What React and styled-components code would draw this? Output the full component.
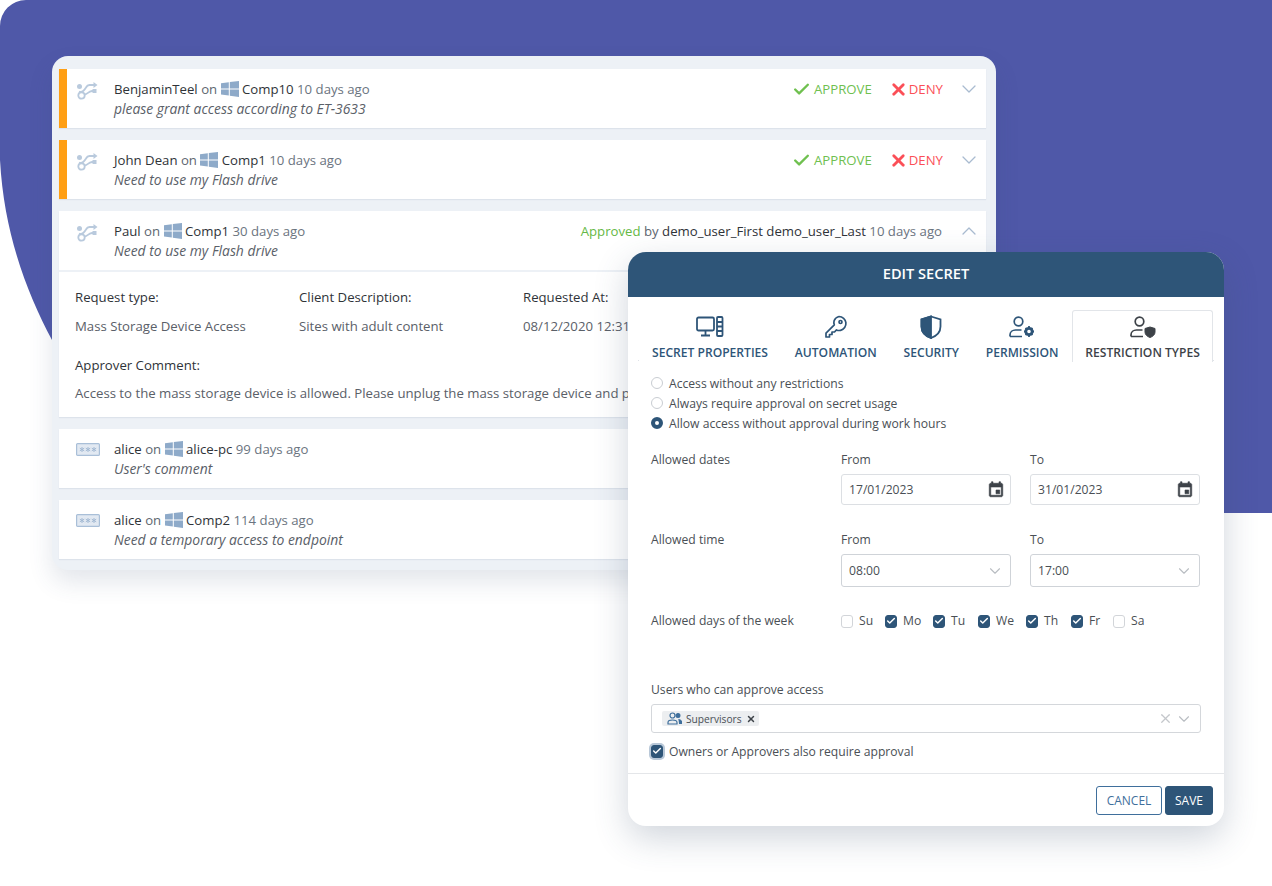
import React from "react";
import styled, { createGlobalStyle } from "styled-components";
import { Check, X, ChevronDown, ChevronUp } from "lucide-react";

const GlobalStyle = createGlobalStyle`
  html, body {
    margin: 0;
    padding: 0;
    background: #ffffff;
    font-family: "Open Sans", "Liberation Sans", sans-serif;
    font-size: 13.2px;
    color: #4a4f55;
  }
`;

const WindowsIcon = () => (
  <WinSvg viewBox="0 0 18 16">
    <path d="M0 2.3 7.8 1.2V7.4H0zM8.8 1 18 0V7.4H8.8zM0 8.4H7.8V14.6L0 13.5zM8.8 8.4H18V16L8.8 14.8z" fill="#8eaac9" />
  </WinSvg>
);

const UsbIcon = () => (
  <RowIconSvg viewBox="0 0 22 20" fill="none" stroke="#b9cadd" strokeWidth="1.8">
    <circle cx="5.5" cy="15.5" r="3.2" />
    <path d="M3 11.5C6 13 8.5 10 10 7.5 11 5.5 12 5 13.5 5H18" />
    <path d="M8.5 14.5C12 14 12 11.5 16 11h1" />
    <path d="M17.5 2 21.5 5 17.5 8z" fill="#b9cadd" stroke="none" />
    <circle cx="3.5" cy="6.5" r="2.5" fill="#b9cadd" stroke="none" />
    <rect x="16.5" y="9" width="4" height="4" fill="#b9cadd" stroke="none" />
  </RowIconSvg>
);

const PasswordIcon = () => (
  <PasswordSvg viewBox="0 0 24 13" fill="none">
    <rect x=".6" y=".6" width="22.8" height="11.8" rx="1" fill="#e2e9f2" stroke="#a9bfd8" strokeWidth="1.2" />
    <g stroke="#a2b9d3" strokeWidth="1">
      <path d="M6 4v5M3.8 5.2l4.4 2.6M8.2 5.2 3.8 7.8" />
      <path d="M12 4v5M9.8 5.2l4.4 2.6M14.2 5.2 9.8 7.8" />
      <path d="M18 4v5M15.8 5.2l4.4 2.6M20.2 5.2l-4.4 2.6" />
    </g>
  </PasswordSvg>
);

const MonitorIcon = () => (
  <svg width="28" height="22" viewBox="0 0 28 22" fill="none" stroke="currentColor" strokeWidth="1.8">
    <rect x="1" y="1.5" width="17" height="13" rx="1.5" />
    <path d="M9.5 14.5v4M5 19.5h9" />
    <rect x="21" y="1" width="5.5" height="19" rx="1" />
    <path d="M21 6h5.5M21 10.5h5.5M21 15h5.5" />
  </svg>
);

const KeyIcon = () => (
  <svg width="24" height="24" viewBox="0 0 24 24" fill="none" stroke="currentColor" strokeWidth="1.7" strokeLinejoin="round">
    <path d="M15 1.5a7 7 0 0 1 1.6 13.8c-1.6.4-3 .1-4.1-.4L10.5 17H8v2.5H5.5V22H2v-3.8l8.3-8.3c-.5-1.3-.6-2.7-.2-4.1A7 7 0 0 1 15 1.5z" />
    <circle cx="16.5" cy="7" r="1.5" />
  </svg>
);

const ShieldIcon = () => (
  <svg width="22" height="24" viewBox="0 0 22 24" fill="none" stroke="currentColor" strokeWidth="1.8">
    <path d="M11 1.5 20.5 4.5v7c0 5.5-4 9.5-9.5 11.5C5.5 21 1.5 17 1.5 11.5v-7z" />
    <path d="M11 1.5V23C5.5 21 1.5 17 1.5 11.5v-7z" fill="currentColor" />
  </svg>
);

const UserGearIcon = () => (
  <svg width="26" height="22" viewBox="0 0 26 22" fill="none" stroke="currentColor" strokeWidth="1.7">
    <circle cx="9.5" cy="5.5" r="4.3" />
    <path d="M1 20.5V19c0-3 2.5-5 5.5-5h6M1 20.5h12" />
    <circle cx="20" cy="15.5" r="3.2" strokeWidth="2.8" />
    <path d="M20 10v2M20 19v2M15 15.5h2M23 15.5h2M16.5 12l1.4 1.4M22.1 17.6l1.4 1.4M16.5 19l1.4-1.4M22.1 13.4l1.4-1.4" strokeWidth="1.8" />
  </svg>
);

const UserShieldIcon = () => (
  <svg width="26" height="22" viewBox="0 0 26 22" fill="none" stroke="currentColor" strokeWidth="1.7">
    <circle cx="9.5" cy="5.5" r="4.3" />
    <path d="M1 20.5V19c0-3 2.5-5 5.5-5h6M1 20.5h12" />
    <path d="M20 11l5 1.5V16c0 2.5-2 4.5-5 5.5-3-1-5-3-5-5.5v-3.5z" fill="currentColor" strokeWidth="1" />
  </svg>
);

const CalendarIcon = () => (
  <svg width="18" height="18" viewBox="0 0 24 24" fill="#3d4248">
    <path d="M17 12h-5v5h5v-5zM16 1v2H8V1H6v2H5c-1.11 0-1.99.9-1.99 2L3 19c0 1.1.89 2 2 2h14c1.1 0 2-.9 2-2V5c0-1.1-.9-2-2-2h-1V1h-2zm3 18H5V8h14v11z" stroke="#3d4248" strokeWidth=".8" />
  </svg>
);

const GroupIcon = () => (
  <svg width="15" height="13" viewBox="0 0 15 13" fill="none" stroke="#3f6f9c" strokeWidth="1.2">
    <circle cx="5.5" cy="3.5" r="2.5" />
    <path d="M1 12v-1.5C1 8.8 2.5 8 5.5 8s4.5.8 4.5 2.5V12z" />
    <circle cx="11" cy="3.5" r="1.9" fill="#3f6f9c" />
    <path d="M11.5 7.5c1.5.2 3 1 3 2.5v1.5H12" fill="#3f6f9c" />
  </svg>
);

const RequestRow = ({ accent, kind, user, host, age, comment, actions, approved, open, children }) => (
  <Row>
    <RowHead $accent={accent}>
      <RowIcon>{kind === "usb" ? <UsbIcon /> : <PasswordIcon />}</RowIcon>
      <RowText>
        <RowTitle>
          <b>{user}</b> on <WindowsIcon /> <b>{host}</b> <Age>{age}</Age>
        </RowTitle>
        <Comment>{comment}</Comment>
      </RowText>
      {actions && (
        <Actions>
          <ActionLink $color="#6fc04f" $gap={3}>
            <Check size={19} strokeWidth={3} /> APPROVE
          </ActionLink>
          <ActionLink $color="#fb4f57" $gap={1}>
            <X size={19} strokeWidth={3.5} /> DENY
          </ActionLink>
        </Actions>
      )}
      {approved && (
        <Status>
          <em>Approved</em> by <b>{approved}</b> <Age>10 days ago</Age>
        </Status>
      )}
      {(actions || approved) && (
        <Toggle>{open ? <ChevronUp size={24} strokeWidth={1.3} /> : <ChevronDown size={24} strokeWidth={1.3} />}</Toggle>
      )}
    </RowHead>
    {children}
  </Row>
);

const tabs = [
  { label: "SECRET PROPERTIES", icon: <MonitorIcon /> },
  { label: "AUTOMATION", icon: <KeyIcon /> },
  { label: "SECURITY", icon: <ShieldIcon /> },
  { label: "PERMISSION", icon: <UserGearIcon /> },
  { label: "RESTRICTION TYPES", icon: <UserShieldIcon />, active: true },
];

const days = [
  { label: "Su", on: false, width: 44 },
  { label: "Mo", on: true, width: 48 },
  { label: "Tu", on: true, width: 45 },
  { label: "We", on: true, width: 48 },
  { label: "Th", on: true, width: 45 },
  { label: "Fr", on: true, width: 42 },
  { label: "Sa", on: false, width: 40 },
];

const Tick = ({ size = 12 }) => <Check size={size} color="#ffffff" strokeWidth={3.5} />;

export default function App() {
  return (
    <>
      <GlobalStyle />
      <Page>
        <Blob viewBox="0 0 1272 513" preserveAspectRatio="none">
          <path d="M26 0H1272V513H300C150 513 80 420 52 340 28 295 4 235 0 160V26A26 26 0 0 1 26 0Z" fill="#4f58a8" />
        </Blob>
        <ListCard>
          <RequestRow accent kind="usb" user="BenjaminTeel" host="Comp10" age="10 days ago" comment="please grant access according to ET-3633" actions />
          <RequestRow accent kind="usb" user="John Dean" host="Comp1" age="10 days ago" comment="Need to use my Flash drive" actions />
          <RequestRow kind="usb" user="Paul" host="Comp1" age="30 days ago" comment="Need to use my Flash drive" approved="demo_user_First demo_user_Last" open>
            <Details>
              <DetailColumns>
                <div>
                  <DetailLabel>Request type:</DetailLabel>
                  <DetailValue>Mass Storage Device Access</DetailValue>
                </div>
                <div>
                  <DetailLabel>Client Description:</DetailLabel>
                  <DetailValue>Sites with adult content</DetailValue>
                </div>
                <div>
                  <DetailLabel>Requested At:</DetailLabel>
                  <DetailValue>08/12/2020 12:31</DetailValue>
                </div>
              </DetailColumns>
              <DetailLabel>Approver Comment:</DetailLabel>
              <DetailValue $tight>Access to the mass storage device is allowed. Please unplug the mass storage device and p</DetailValue>
            </Details>
          </RequestRow>
          <RequestRow kind="password" user="alice" host="alice-pc" age="99 days ago" comment="User's comment" />
          <RequestRow kind="password" user="alice" host="Comp2" age="114 days ago" comment="Need a temporary access to endpoint" />
        </ListCard>

        <Modal>
          <ModalHeader>EDIT SECRET</ModalHeader>
          <TabBar>
            {tabs.map((t) => (
              <Tab key={t.label} $active={t.active}>
                <TabIcon>{t.icon}</TabIcon>
                {t.label}
              </Tab>
            ))}
          </TabBar>
          <ModalBody>
            <RadioGroup>
              <RadioRow><Radio /> Access without any restrictions</RadioRow>
              <RadioRow><Radio /> Always require approval on secret usage</RadioRow>
              <RadioRow><Radio $on /> Allow access without approval during work hours</RadioRow>
            </RadioGroup>

            <FieldGrid>
              <span>Allowed dates</span>
              <Field>
                From
                <DateBox>17/01/2023 <CalendarIcon /></DateBox>
              </Field>
              <Field>
                To
                <DateBox>31/01/2023 <CalendarIcon /></DateBox>
              </Field>
            </FieldGrid>

            <TimeGrid>
              <span>Allowed time</span>
              <Field>
                From
                <SelectBox>08:00 <ChevronDown size={18} color="#b9bdc2" strokeWidth={1.5} /></SelectBox>
              </Field>
              <Field>
                To
                <SelectBox>17:00 <ChevronDown size={18} color="#b9bdc2" strokeWidth={1.5} /></SelectBox>
              </Field>
            </TimeGrid>

            <DaysGrid>
              <span>Allowed days of the week</span>
              <DayList>
                {days.map((d) => (
                  <Day key={d.label} style={{ width: d.width }}>
                    <CheckBox $on={d.on}>{d.on && <Tick />}</CheckBox>
                    {d.label}
                  </Day>
                ))}
              </DayList>
            </DaysGrid>

            <ApproverLabel>Users who can approve access</ApproverLabel>
            <MultiSelect>
              <Chip>
                <GroupIcon /> Supervisors <X size={10} strokeWidth={3.5} color="#3d4248" />
              </Chip>
              <SelectTools>
                <X size={15} color="#c4c7cb" strokeWidth={2} />
                <ChevronDown size={18} color="#b9bdc2" strokeWidth={1.5} />
              </SelectTools>
            </MultiSelect>
            <OwnerRow>
              <CheckBox $on $focus><Tick /></CheckBox>
              Owners or Approvers also require approval
            </OwnerRow>
          </ModalBody>
          <ModalFooter>
            <OutlineButton>CANCEL</OutlineButton>
            <SolidButton>SAVE</SolidButton>
          </ModalFooter>
        </Modal>
      </Page>
    </>
  );
}

const Page = styled.div`
  position: relative;
  width: 1272px;
  height: 886px;
  box-sizing: border-box;
  padding: 56px 0 0 52px;
  overflow: hidden;
  background: #ffffff;
`;

const Blob = styled.svg`
  position: absolute;
  left: 0;
  top: 0;
  width: 1272px;
  height: 513px;
`;

const ListCard = styled.div`
  position: relative;
  width: 944px;
  height: 514px;
  box-sizing: border-box;
  padding: 13px 10px 0 7px;
  display: flex;
  flex-direction: column;
  gap: 12px;
  background: #edf1f6;
  border-radius: 16px;
  box-shadow: 0 12px 24px rgba(60, 80, 110, 0.14);
`;

const Row = styled.div`
  background: #ffffff;
  box-shadow: 0 1px 1px rgba(90, 110, 140, 0.1);
  overflow: hidden;
`;

const RowHead = styled.div`
  display: flex;
  align-items: flex-start;
  height: 59px;
  box-sizing: border-box;
  padding: 10px 5px 0 ${(p) => (p.$accent ? "9px" : "17px")};
  border-left: ${(p) => (p.$accent ? "8px solid #ff9f14" : "none")};
`;

const RowIcon = styled.div`
  width: 38px;
  flex: none;
  padding-top: 1px;
`;

const RowIconSvg = styled.svg`
  display: block;
  width: 22px;
  height: 20px;
`;

const PasswordSvg = styled(RowIconSvg)`
  width: 24px;
  height: 13px;
  margin-top: 3px;
`;

const WinSvg = styled.svg`
  width: 18px;
  height: 16px;
  vertical-align: -3px;
`;

const RowText = styled.div`
  flex: 1;
  line-height: 20px;
`;

const RowTitle = styled.div`
  color: #5d6670;
  b {
    font-weight: 500;
    color: #2f3338;
  }
`;

const Age = styled.span`
  color: #6b7480;
`;

const Comment = styled.div`
  font-size: 13.9px;
  font-style: italic;
  color: #5a6068;
`;

const Actions = styled.div`
  display: flex;
  gap: 17px;
  margin-right: 14px;
`;

const ActionLink = styled.div`
  display: flex;
  align-items: center;
  gap: ${(p) => p.$gap}px;
  height: 20px;
  font-weight: 500;
  color: ${(p) => p.$color};
`;

const Status = styled.div`
  line-height: 20px;
  margin-right: 15px;
  color: #5d6670;
  em {
    font-style: normal;
    font-weight: 500;
    color: #65b845;
  }
  b {
    font-weight: 500;
    color: #2f3338;
  }
`;

const Toggle = styled.div`
  width: 24px;
  height: 20px;
  display: flex;
  align-items: center;
  color: #a9bbd0;
`;

const Details = styled.div`
  border-top: 2px solid #edf1f6;
  padding: 15px 16px 0;
  height: 147px;
  box-sizing: border-box;
  white-space: nowrap;
`;

const DetailColumns = styled.div`
  display: grid;
  grid-template-columns: 224px 224px 224px;
  margin-bottom: 19px;
`;

const DetailLabel = styled.div`
  font-weight: 500;
  color: #2f3338;
  line-height: 20px;
`;

const DetailValue = styled.div`
  margin-top: ${(p) => (p.$tight ? "8px" : "9px")};
  line-height: 20px;
  color: #5a6068;
`;

const Modal = styled.div`
  position: absolute;
  left: 628px;
  top: 252px;
  width: 596px;
  height: 574px;
  display: flex;
  flex-direction: column;
  background: #ffffff;
  border-radius: 18px;
  box-shadow: 0 12px 34px rgba(60, 80, 110, 0.24);
  overflow: hidden;
`;

const ModalHeader = styled.div`
  height: 45px;
  flex: none;
  box-sizing: border-box;
  padding-bottom: 3px;
  display: flex;
  align-items: center;
  justify-content: center;
  background: #2e5578;
  color: #ffffff;
  font-size: 14.6px;
  font-weight: 600;
`;

const TabBar = styled.div`
  display: flex;
  align-items: flex-end;
  height: 64px;
  flex: none;
  margin: 0 10px;
  padding-left: 0.6px;
  box-sizing: border-box;
  border-bottom: 1px solid #dfe3e8;
`;

const Tab = styled.div`
  display: flex;
  flex-direction: column;
  align-items: center;
  justify-content: flex-end;
  height: 52px;
  box-sizing: border-box;
  padding: 0 12.4px;
  font-size: 12.1px;
  font-weight: 600;
  line-height: 18px;
  white-space: nowrap;
  color: ${(p) => (p.$active ? "#3d4248" : "#2e5578")};
  border: 1px solid ${(p) => (p.$active ? "#e2e5e9" : "transparent")};
  border-bottom: none;
  border-radius: 3px 3px 0 0;
  background: #ffffff;
  margin-bottom: -2px;
`;

const TabIcon = styled.div`
  height: 26px;
  margin-bottom: 4px;
  display: flex;
  align-items: center;
  justify-content: center;
`;

const ModalBody = styled.div`
  flex: 1;
  padding: 12px 23px 0;
  font-size: 12.15px;
  color: #4a4f55;
`;

const RadioGroup = styled.div`
  display: flex;
  flex-direction: column;
`;

const RadioRow = styled.div`
  display: flex;
  align-items: center;
  gap: 6px;
  height: 20px;
`;

const Radio = styled.span`
  width: 12px;
  height: 12px;
  box-sizing: border-box;
  border-radius: 50%;
  border: ${(p) => (p.$on ? "4px solid #2e5578" : "1px solid #c9cdd2")};
  background: #ffffff;
`;

const FieldGrid = styled.div`
  display: grid;
  grid-template-columns: 171px 170px 170px;
  column-gap: 19px;
  margin-top: 17px;
  line-height: 20px;
`;

const TimeGrid = styled(FieldGrid)`
  margin-top: 25px;
`;

const Field = styled.div`
  display: flex;
  flex-direction: column;
  gap: 4px;
`;

const DateBox = styled.div`
  height: 31px;
  box-sizing: border-box;
  display: flex;
  align-items: center;
  justify-content: space-between;
  padding: 0 5px 0 7px;
  border: 1px solid #dcdfe3;
  border-radius: 3px;
`;

const SelectBox = styled(DateBox)`
  height: 33px;
  padding: 0 6px 0 7px;
  border-color: #cfd3d8;
`;

const DaysGrid = styled(FieldGrid)`
  grid-template-columns: 171px 1fr;
  margin-top: 24px;
`;

const DayList = styled.div`
  display: flex;
`;

const Day = styled.div`
  display: flex;
  align-items: center;
  gap: 6px;
  flex: none;
`;

const CheckBox = styled.span`
  width: 12px;
  height: 13px;
  flex: none;
  display: inline-flex;
  align-items: center;
  justify-content: center;
  box-sizing: border-box;
  border-radius: 3px;
  border: 1px solid ${(p) => (p.$on ? "#2e5578" : "#d2d5d9")};
  background: ${(p) => (p.$on ? "#2e5578" : "#ffffff")};
  box-shadow: ${(p) => (p.$focus ? "0 0 0 2px #b9c8d8" : "none")};
`;

const ApproverLabel = styled.div`
  margin-top: 49px;
  line-height: 20px;
`;

const MultiSelect = styled.div`
  margin-top: 4px;
  height: 29px;
  box-sizing: border-box;
  display: flex;
  align-items: center;
  justify-content: space-between;
  padding: 0 7px 0 10px;
  border: 1px solid #d4d7db;
  border-radius: 3px;
`;

const Chip = styled.div`
  display: flex;
  align-items: center;
  gap: 4px;
  height: 15px;
  padding: 0 3px 0 5px;
  background: #eceef0;
  border-radius: 2px;
  font-size: 10.2px;
`;

const SelectTools = styled.div`
  display: flex;
  align-items: center;
  gap: 2px;
`;

const OwnerRow = styled.div`
  display: flex;
  align-items: center;
  gap: 6px;
  margin-top: 8px;
  height: 20px;
`;

const ModalFooter = styled.div`
  height: 53px;
  flex: none;
  box-sizing: border-box;
  display: flex;
  justify-content: flex-end;
  gap: 3px;
  padding: 12px 11px 0 0;
  border-top: 1px solid #e4e6e9;
`;

const OutlineButton = styled.div`
  width: 66px;
  height: 29px;
  box-sizing: border-box;
  display: flex;
  align-items: center;
  justify-content: center;
  font-size: 12px;
  color: #3f6f9c;
  border: 1px solid #3f6f9c;
  border-radius: 3px;
`;

const SolidButton = styled(OutlineButton)`
  width: 48px;
  color: #ffffff;
  font-weight: 500;
  background: #2e5578;
  border-color: #2e5578;
`;
